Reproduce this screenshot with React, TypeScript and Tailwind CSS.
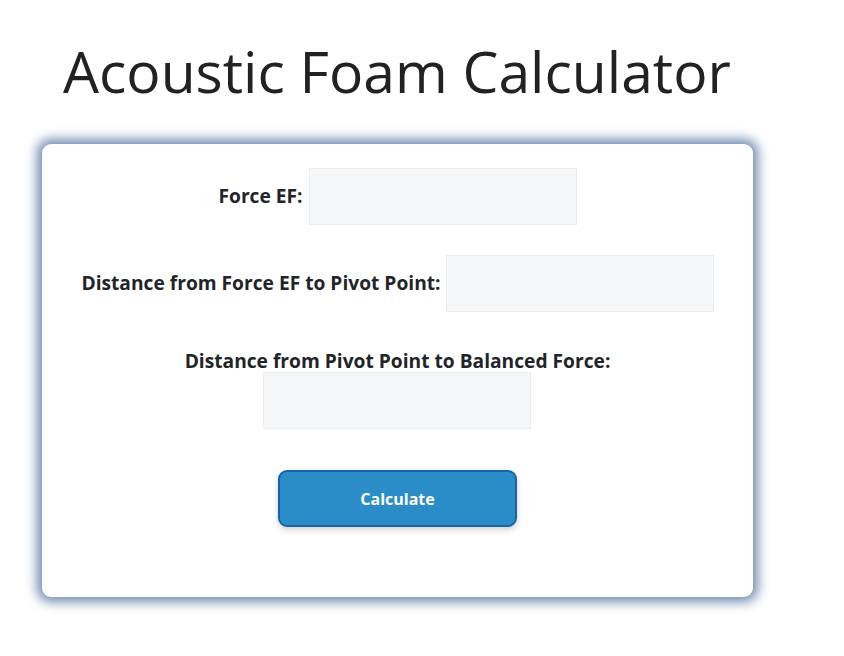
export default function App() {
  const font = { fontFamily: '"Open Sans", "Noto Sans", sans-serif' };
  return (
    <div className="w-[844px] h-[656px] bg-white text-[#212529]" style={font}>
      <h1 className="pl-[63px] pt-[36px] text-[57px] leading-[70px] font-normal text-[#222222]">
        Acoustic Foam Calculator
      </h1>
      <div className="ml-[42px] mt-[38px] w-[711px] h-[453px] rounded-[9px] bg-white shadow-[0_0_12px_5px_rgba(112,140,178,1)] pt-[24px] flex flex-col items-center">
        <div className="flex items-center gap-[6px]">
          <label className="text-[19.2px] font-bold">Force EF:</label>
          <div className="w-[268px] h-[57px] bg-[#f6f7f9] border border-[#ebedf0]" />
        </div>
        <div className="flex items-center gap-[5px] mt-[30px]">
          <label className="text-[19.2px] font-bold">Distance from Force EF to Pivot Point:</label>
          <div className="w-[268px] h-[57px] bg-[#f6f7f9] border border-[#ebedf0]" />
        </div>
        <div className="flex flex-col items-center mt-[36px]">
          <label className="text-[19.2px] font-bold leading-[26px]">Distance from Pivot Point to Balanced Force:</label>
          <div className="w-[268px] h-[57px] bg-[#f6f7f9] border border-[#ebedf0] mt-[-2px]" />
        </div>
        <button className="mt-[41px] w-[239px] h-[57px] shrink-0 rounded-[9px] bg-[#2a8dc8] border-2 border-[#1862ab] text-white font-bold text-[16px] shadow-[0_3px_6px_rgba(0,0,0,0.18)]">
          Calculate
        </button>
      </div>
    </div>
  );
}
